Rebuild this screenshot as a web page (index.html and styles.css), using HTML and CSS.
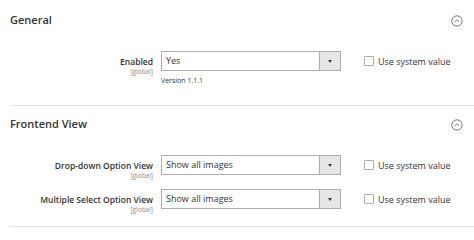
FILE: index.html
```html
<!DOCTYPE html>
<html>
<head>
<meta charset="utf-8">
<link rel="stylesheet" href="styles.css">
</head>
<body>
<div class="page">
  <section class="section">
    <div class="section-head">
      <h2 class="section-title">General</h2>
      <span class="collapse-icon"><svg viewBox="0 0 12 12" width="12" height="12"><circle cx="6" cy="6" r="5.2" fill="none" stroke="#6a6a6a" stroke-width="0.9"/><path d="M3.8 6.9 L6 4.8 L8.2 6.9" fill="none" stroke="#6a6a6a" stroke-width="0.9"/></svg></span>
    </div>
    <div class="row first">
      <div class="label"><span class="label-text">Enabled</span><span class="scope">[global]</span></div>
      <div class="control">
        <div class="select"><span class="select-value">Yes</span><span class="select-btn"><span class="arrow"></span></span></div>
        <div class="note">Version 1.1.1</div>
      </div>
      <label class="use-system"><span class="checkbox"></span><span>Use system value</span></label>
    </div>
  </section>
  <section class="section second">
    <div class="section-head">
      <h2 class="section-title">Frontend View</h2>
      <span class="collapse-icon"><svg viewBox="0 0 12 12" width="12" height="12"><circle cx="6" cy="6" r="5.2" fill="none" stroke="#6a6a6a" stroke-width="0.9"/><path d="M3.8 6.9 L6 4.8 L8.2 6.9" fill="none" stroke="#6a6a6a" stroke-width="0.9"/></svg></span>
    </div>
    <div class="row first">
      <div class="label"><span class="label-text">Drop-down Option View</span><span class="scope">[global]</span></div>
      <div class="control">
        <div class="select"><span class="select-value">Show all images</span><span class="select-btn"><span class="arrow"></span></span></div>
      </div>
      <label class="use-system"><span class="checkbox"></span><span>Use system value</span></label>
    </div>
    <div class="row next">
      <div class="label"><span class="label-text">Multiple Select Option View</span><span class="scope">[global]</span></div>
      <div class="control">
        <div class="select"><span class="select-value">Show all images</span><span class="select-btn"><span class="arrow"></span></span></div>
      </div>
      <label class="use-system"><span class="checkbox"></span><span>Use system value</span></label>
    </div>
  </section>
</div>
</body>
</html>
```

FILE: styles.css
```css
html, body {
  margin: 0;
  padding: 0;
  background: #ffffff;
}
body {
  font-family: "Open Sans", "Liberation Sans", sans-serif;
  color: #333333;
  width: 474px;
  height: 240px;
  overflow: hidden;
}
.page {
  padding-left: 10px;
}
.section {
  border-bottom: 1px solid #e3e3e3;
}
.section:first-child {
  padding-bottom: 19px;
}
.section.second {
  padding-bottom: 13px;
}
.section-head {
  display: flex;
  align-items: center;
  justify-content: space-between;
  height: 40px;
  padding-right: 11px;
}
.second .section-head {
  height: 36px;
}
.section-title {
  margin: 0;
  font-size: 11px;
  font-weight: 600;
  color: #333333;
  line-height: 14px;
}
.collapse-icon {
  display: flex;
  width: 12px;
  height: 12px;
  margin-top: 2px;
}
.row {
  display: flex;
  align-items: flex-start;
}
.row.first {
  margin-top: 11px;
}
.second .row.first {
  margin-top: 13px;
}
.row.next {
  margin-top: 10px;
}
.label {
  width: 143px;
  display: flex;
  flex-direction: column;
  align-items: flex-end;
  padding-top: 5px;
  margin-right: 8px;
}
.label-text {
  font-size: 8.5px;
  font-weight: 600;
  line-height: 12px;
  color: #333333;
  white-space: nowrap;
}
.scope {
  font-size: 6.5px;
  line-height: 7px;
  color: #8a8a8a;
}
.control {
  width: 180px;
}
.select {
  display: flex;
  height: 20px;
  box-sizing: border-box;
  border: 1px solid #adadad;
  background: #fff;
}
.select-value {
  flex: 1;
  font-size: 9px;
  line-height: 18px;
  padding-left: 4px;
  color: #333333;
}
.select-btn {
  width: 20px;
  border-left: 1px solid #adadad;
  background: #e6e6e6;
  display: flex;
  align-items: center;
  justify-content: center;
}
.arrow {
  width: 0;
  height: 0;
  border-left: 2px solid transparent;
  border-right: 2px solid transparent;
  border-top: 3px solid #41362f;
}
.note {
  font-size: 7px;
  line-height: 10px;
  margin-top: 5px;
  color: #333333;
}
.use-system {
  display: flex;
  align-items: center;
  margin-left: 23px;
  height: 20px;
  font-size: 9px;
  color: #333333;
  white-space: nowrap;
}
.checkbox {
  width: 10px;
  height: 10px;
  box-sizing: border-box;
  border: 1px solid #adadad;
  border-radius: 1px;
  margin-right: 4px;
  background: #fff;
}
```
